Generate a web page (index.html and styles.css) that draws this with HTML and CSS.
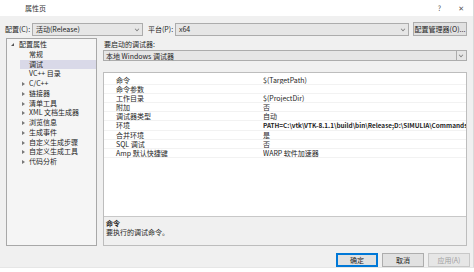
FILE: index.html
```html
<!DOCTYPE html>
<html lang="zh-CN">
<head>
    <meta charset="UTF-8">
    <title>属性页</title>
    <link rel="stylesheet" href="styles.css">
</head>
<body>
    <div class="window">
        <div class="titlebar">
            <span class="title">属性页</span>
            <span class="help">?</span>
            <span class="close">✕</span>
        </div>

        <div class="toolbar">
            <label class="tb-label">配置(C):</label>
            <div class="combo combo-config"><span>活动(Release)</span><i class="chev"></i></div>
            <label class="tb-label">平台(P):</label>
            <div class="combo combo-platform"><span>x64</span><i class="chev"></i></div>
            <button class="btn btn-manager">配置管理器(O)...</button>
        </div>

        <div class="main">
            <ul class="tree">
                <li class="root"><span class="open"></span>配置属性</li>
                <li class="child">常规</li>
                <li class="child selected">调试</li>
                <li class="child">VC++ 目录</li>
                <li class="child"><span class="closed"></span>C/C++</li>
                <li class="child"><span class="closed"></span>链接器</li>
                <li class="child"><span class="closed"></span>清单工具</li>
                <li class="child"><span class="closed"></span>XML 文档生成器</li>
                <li class="child"><span class="closed"></span>浏览信息</li>
                <li class="child"><span class="closed"></span>生成事件</li>
                <li class="child"><span class="closed"></span>自定义生成步骤</li>
                <li class="child"><span class="closed"></span>自定义生成工具</li>
                <li class="child"><span class="closed"></span>代码分析</li>
            </ul>

            <div class="pane">
                <div class="pane-label">要启动的调试器:</div>
                <div class="combo combo-debugger"><span>本地 Windows 调试器</span><i class="chev"></i></div>

                <div class="grid">
                    <div class="rows">
                        <div class="row"><span class="name">命令</span><span class="value">$(TargetPath)</span></div>
                        <div class="row"><span class="name">命令参数</span><span class="value"></span></div>
                        <div class="row"><span class="name">工作目录</span><span class="value">$(ProjectDir)</span></div>
                        <div class="row"><span class="name">附加</span><span class="value">否</span></div>
                        <div class="row"><span class="name">调试器类型</span><span class="value">自动</span></div>
                        <div class="row"><span class="name">环境</span><span class="value bold">PATH=C:\vtk\VTK-8.1.1\build\bin\Release;D:\SIMULIA\Commands</span></div>
                        <div class="row"><span class="name">合并环境</span><span class="value">是</span></div>
                        <div class="row"><span class="name">SQL 调试</span><span class="value">否</span></div>
                        <div class="row"><span class="name">Amp 默认快捷键</span><span class="value">WARP 软件加速器</span></div>
                    </div>
                    <div class="desc">
                        <div class="desc-title">命令</div>
                        <div class="desc-text">要执行的调试命令。</div>
                    </div>
                </div>
            </div>
        </div>

        <div class="footer">
            <button class="btn btn-default">确定</button>
            <button class="btn">取消</button>
            <button class="btn" disabled>应用(A)</button>
        </div>
    </div>
</body>
</html>
```

FILE: styles.css
```css
* {
    margin: 0;
    padding: 0;
    box-sizing: border-box;
}

body {
    width: 474px;
    height: 272px;
    overflow: hidden;
    background: #ffffff;
    font-family: 'Noto Sans CJK SC', 'DejaVu Sans', sans-serif;
    font-size: 7px;
    color: #1e1e1e;
}

.window {
    height: 268px;
    background: #f0f0f0;
    border-right: 1px solid #dadada;
    border-bottom: 1px solid #e6e6e6;
}

.titlebar {
    height: 16px;
    background: #ffffff;
    display: flex;
    align-items: center;
    padding-left: 25px;
    color: #333;
}

.title {
    flex: 1;
}

.help {
    margin-right: 17px;
    color: #555;
}

.close {
    margin-right: 9px;
    color: #555;
}

.toolbar {
    display: flex;
    align-items: center;
    height: 14px;
    margin-top: 6px;
    padding-left: 5px;
}

.tb-label {
    width: 27px;
}

.combo {
    position: relative;
    height: 13px;
    background: #e6e6e6;
    border: 1px solid #acacac;
    display: flex;
    align-items: center;
    padding-left: 3px;
}

.combo-config {
    width: 111px;
    margin-right: 5px;
}

.combo-platform {
    width: 234px;
    margin-right: 4px;
}

.chev {
    position: absolute;
    right: 3px;
    top: 3px;
    width: 4px;
    height: 4px;
    border-right: 1px solid #7a7a7a;
    border-bottom: 1px solid #7a7a7a;
    transform: rotate(45deg) scale(0.8);
}

.btn {
    font-family: inherit;
    font-size: 7px;
    color: #1e1e1e;
    background: #e1e1e1;
    border: 1px solid #adadad;
    height: 14px;
}

.btn-manager {
    width: 54px;
}

.main {
    display: flex;
    margin-top: 2px;
    padding-left: 6px;
    gap: 6px;
}

.tree {
    list-style: none;
    width: 91px;
    height: 208px;
    background: #f5f5f5;
    border: 1px solid #a8a8a8;
    padding-top: 1px;
}

.tree li {
    position: relative;
    height: 9.75px;
    line-height: 9.75px;
    white-space: nowrap;
}

.tree .root {
    padding-left: 12px;
}

.tree .child {
    padding-left: 22px;
}

.tree .selected {
    background: #d9d9e8;
    margin-left: 13px;
    padding-left: 9px;
}

.open {
    position: absolute;
    left: 4px;
    top: 3px;
    width: 0;
    height: 0;
    border-left: 3px solid transparent;
    border-bottom: 3px solid #555;
}

.closed {
    position: absolute;
    left: 15px;
    top: 3px;
    width: 0;
    height: 0;
    border-top: 2px solid transparent;
    border-bottom: 2px solid transparent;
    border-left: 3px solid #777;
}

.pane {
    width: 364px;
    height: 208px;
    display: flex;
    flex-direction: column;
}

.pane-label {
    height: 12px;
    line-height: 12px;
    padding-left: 1px;
}

.combo-debugger {
    width: 364px;
    height: 11px;
    padding-left: 2px;
}

.combo-debugger .chev {
    right: 3px;
    top: 2px;
}

.combo-debugger::after {
    content: '';
    position: absolute;
    right: 0;
    top: 0;
    width: 9px;
    height: 9px;
    border-left: 1px solid #acacac;
}

.grid {
    margin-top: 11px;
    flex: 1;
    background: #ffffff;
    border: 1px solid #bdbdbd;
    display: flex;
    flex-direction: column;
}

.rows {
    flex: 1;
    padding-top: 3px;
}

.row {
    display: flex;
    height: 9.1px;
    line-height: 9.1px;
    border-bottom: 1px solid #f2f2f2;
    white-space: nowrap;
}

.name {
    width: 159px;
    padding-left: 12px;
}

.value {
    flex: 1;
    overflow: hidden;
}

.bold {
    font-weight: bold;
    font-size: 6.4px;
}

.desc {
    height: 29px;
    background: #f0f0f0;
    border-top: 1px solid #c8c8c8;
    padding: 2px 0 0 2px;
    line-height: 9px;
}

.desc-title {
    font-weight: bold;
}

.footer {
    display: flex;
    justify-content: flex-end;
    gap: 4px;
    margin-top: 7px;
    padding-right: 3px;
}

.footer .btn {
    width: 42px;
}

.btn-default {
    border: 1px solid #0078d7;
    box-shadow: inset 0 0 0 1px #0078d7;
}

.btn:disabled {
    color: #a0a0a0;
    background: #e6e6e6;
    border-color: #c8c8c8;
}
```
